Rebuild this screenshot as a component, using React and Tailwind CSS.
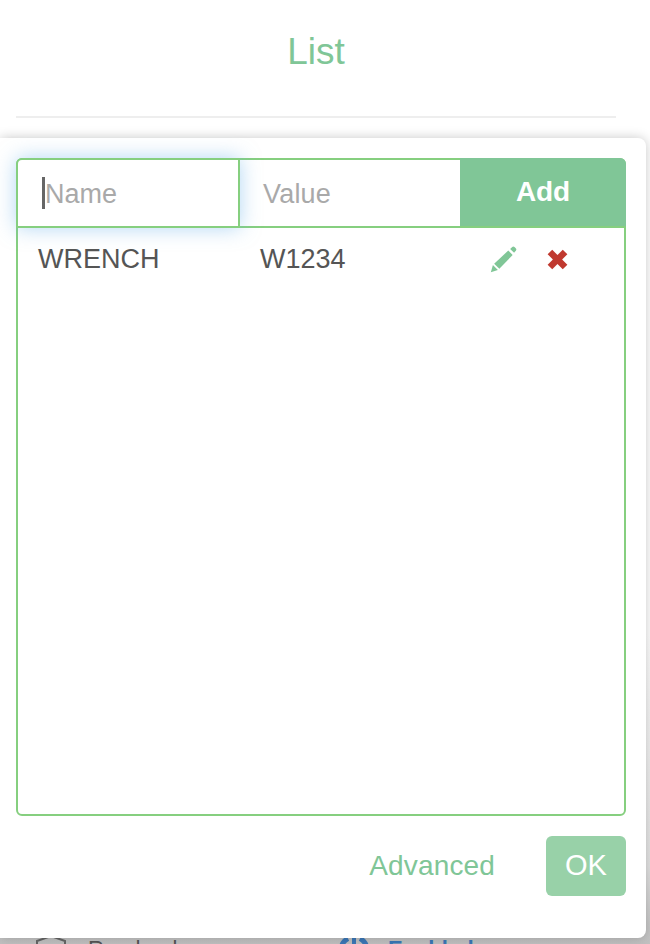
import React from "react";

const font = { fontFamily: '"Liberation Sans", Arial, sans-serif' };

function Pencil() {
  return (
    <svg width="27" height="27" viewBox="0 0 26 26" aria-hidden="true">
      <path d="M0.8 25.2 L2.8 18.4 L7.6 23.2 Z" fill="#80c697" />
      <path d="M4 17 L17.6 4.4 L21.8 8.6 L9 22 Z" fill="#80c697" />
      <path d="M19.4 2.8 L21.4 0.9 Q22.6 0.2 23.6 1 L25 2.4 Q25.8 3.4 25 4.4 L23.2 6.6 Z" fill="#80c697" />
    </svg>
  );
}

function Cross() {
  return (
    <svg width="21" height="21" viewBox="0 0 20 20" aria-hidden="true">
      <path d="M5 0.6 L10 5.6 L15 0.6 L19.4 5 L14.4 10 L19.4 15 L15 19.4 L10 14.4 L5 19.4 L0.6 15 L5.6 10 L0.6 5 Z" fill="#c0392f" />
    </svg>
  );
}

export default function App() {
  return (
    <div className="w-[650px] h-[944px] overflow-hidden bg-white flex flex-col" style={font}>
      <header className="mx-4 w-[600px] h-[118px] shrink-0 border-b-2 border-[#eeeeee] flex justify-center pt-[30px]">
        <h1 className="text-[37px] leading-[44px] text-[#80c697]">List</h1>
      </header>

      <div className="relative mt-5 shrink-0 h-[826px] bg-[linear-gradient(to_bottom,#ffffff_0%,#ffffff_60%,#e4e4e4_88%,#b8b8b8_100%)]">
        <div className="absolute left-[36px] top-[796px] flex items-start text-[#555555]">
          <svg width="30" height="30" viewBox="0 0 30 30" fill="none" stroke="#666666" strokeWidth="2" aria-hidden="true">
            <path d="M1 7 L15 2 L29 7 V24 L15 29 L1 24 Z" />
          </svg>
          <span className="ml-[22px] text-[22px] leading-[30px]">Read-only</span>
        </div>
        <div className="absolute left-[338px] top-[796px] flex items-start text-[#3b78b8]">
          <svg width="32" height="32" viewBox="0 0 32 32" fill="none" aria-hidden="true">
            <path d="M10 4.5 A13 13 0 1 0 22 4.5" stroke="#3b78b8" strokeWidth="5" />
            <path d="M16 0 V14" stroke="#3b78b8" strokeWidth="4" />
          </svg>
          <span className="ml-[18px] text-[22px] leading-[30px] font-bold">Enabled</span>
        </div>

        <section className="relative w-[646px] h-[800px] bg-white rounded-r-lg shadow-[0_0_12px_rgba(0,0,0,0.22)] pt-5 px-4 flex flex-col">
          <div className="w-[610px] h-[658px] border-2 border-[#86cf7f] rounded-md flex flex-col shrink-0 relative">
            <div className="flex h-[70px] -mt-0.5 -mx-0.5 shrink-0">
              <div className="w-[224px] border-2 border-[#86cf7f] rounded-tl-md shadow-[0_0_20px_rgba(102,175,233,0.5)] flex items-center pl-[24px] bg-white relative">
                <span className="w-[3px] h-8 bg-[#666666]" />
                <span className="text-[27px] text-[#a9a9a9] pt-0.5">Name</span>
              </div>
              <div className="w-[220px] border-y-2 border-r-0 border-[#86cf7f] flex items-center pl-[23px] bg-white">
                <span className="text-[27px] text-[#a9a9a9] tracking-[0.2px] pt-0.5">Value</span>
              </div>
              <button className="w-[166px] bg-[#80c697] border-b-2 border-[#86cf7f] rounded-tr-md text-white text-[28px] font-bold text-center tracking-[-0.2px]">
                Add
              </button>
            </div>
            <div className="flex items-center h-[62px] text-[27px] text-[#555555]">
              <span className="w-[222px] pl-5">WRENCH</span>
              <span className="w-[222px] pl-5">W1234</span>
              <span className="flex items-center gap-[30px] pl-[28px]">
                <Pencil />
                <Cross />
              </span>
            </div>
          </div>

          <footer className="flex justify-end items-center mt-5 w-[610px]">
            <a className="text-[28px] text-[#80c697] tracking-[0.15px] mr-[51px]">Advanced</a>
            <button className="w-20 h-[60px] rounded-md bg-[#98d1a8] text-white text-[29px]">OK</button>
          </footer>
        </section>
      </div>
    </div>
  );
}
